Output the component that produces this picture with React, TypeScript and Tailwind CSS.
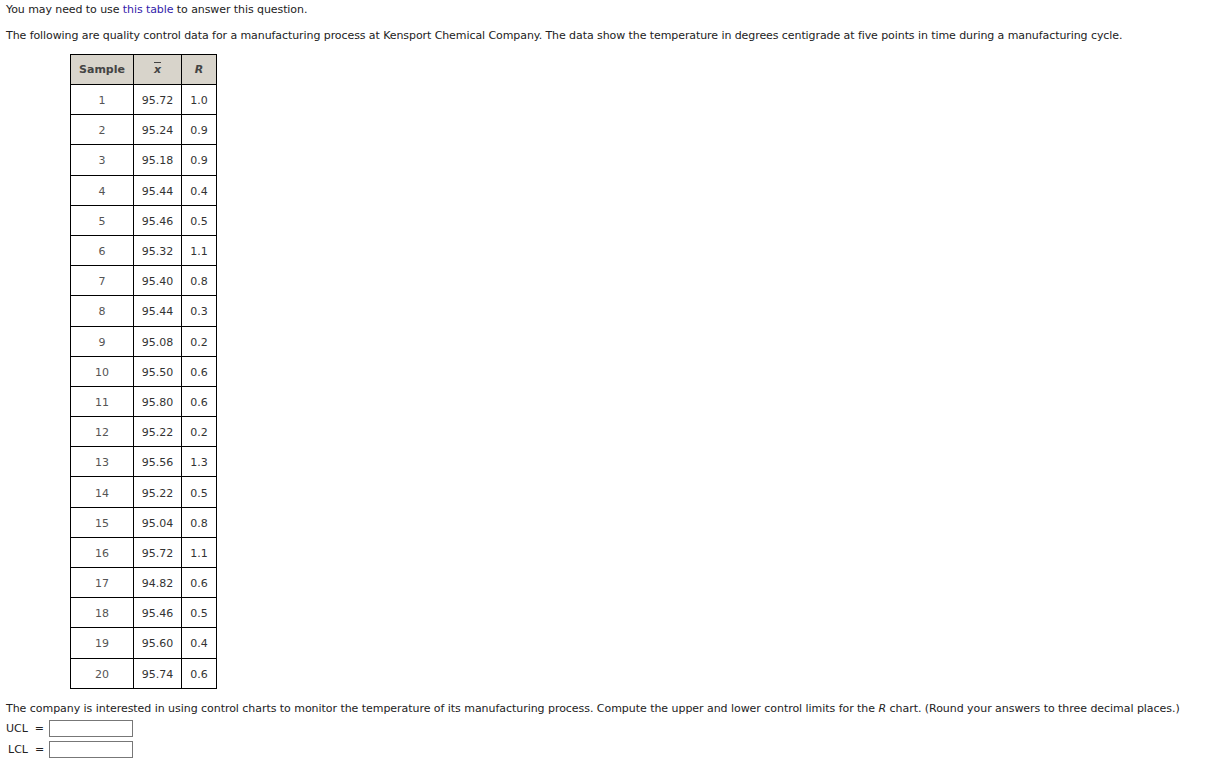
import React from "react";

const rows: [number, string, string][] = [
  [1, "95.72", "1.0"],
  [2, "95.24", "0.9"],
  [3, "95.18", "0.9"],
  [4, "95.44", "0.4"],
  [5, "95.46", "0.5"],
  [6, "95.32", "1.1"],
  [7, "95.40", "0.8"],
  [8, "95.44", "0.3"],
  [9, "95.08", "0.2"],
  [10, "95.50", "0.6"],
  [11, "95.80", "0.6"],
  [12, "95.22", "0.2"],
  [13, "95.56", "1.3"],
  [14, "95.22", "0.5"],
  [15, "95.04", "0.8"],
  [16, "95.72", "1.1"],
  [17, "94.82", "0.6"],
  [18, "95.46", "0.5"],
  [19, "95.60", "0.4"],
  [20, "95.74", "0.6"],
];

export default function App() {
  return (
    <div
      className="w-[1209px] h-[764px] bg-white text-[11px] leading-[13px] text-[#222] pl-[6px] pt-[3px]"
      style={{ fontFamily: '"DejaVu Sans", Verdana, sans-serif' }}
    >
      <p className="tracking-[-0.08px]">
        You may need to use <span className="text-[#3322aa]">this table</span> to answer this question.
      </p>
      <p className="mt-[13px] tracking-[-0.08px]">
        The following are quality control data for a manufacturing process at Kensport Chemical Company. The data show
        the temperature in degrees centigrade at five points in time during a manufacturing cycle.
      </p>
      <table className="ml-[64px] mt-[12px] border-collapse border border-black text-[#333]">
        <thead>
          <tr className="h-[30px] bg-[#d8d4cb]">
            <th className="border border-black w-[63px] font-bold text-[#444]">Sample</th>
            <th className="border border-black w-[48px] font-bold text-[#444]">
              <span className="italic relative inline-block">
                <span className="absolute left-[0px] right-[0px] top-[-1px] h-px bg-[#444]" />
                x
              </span>
            </th>
            <th className="border border-black w-[35px] font-bold italic text-[#444]">R</th>
          </tr>
        </thead>
        <tbody>
          {rows.map(([s, x, r]) => (
            <tr key={s} className="h-[30.2px]">
              <td className="border border-black text-center text-[#555] pt-[2px]">{s}</td>
              <td className="border border-black text-center pt-[2px]">{x}</td>
              <td className="border border-black text-center pt-[2px]">{r}</td>
            </tr>
          ))}
        </tbody>
      </table>
      <p className="mt-[13px] tracking-[-0.045px]">
        The company is interested in using control charts to monitor the temperature of its manufacturing process.
        Compute the upper and lower control limits for the <i>R</i> chart. (Round your answers to three decimal places.)
      </p>
      <div className="mt-[5px] flex items-center">
        <span className="w-[43px]">UCL&nbsp; =</span>
        <input className="w-[84px] h-[17px] border border-[#777] bg-white" />
      </div>
      <div className="mt-[4px] flex items-center">
        <span className="w-[43px] pl-[2px]">LCL&nbsp; =</span>
        <input className="w-[84px] h-[17px] border border-[#777] bg-white" />
      </div>
    </div>
  );
}
